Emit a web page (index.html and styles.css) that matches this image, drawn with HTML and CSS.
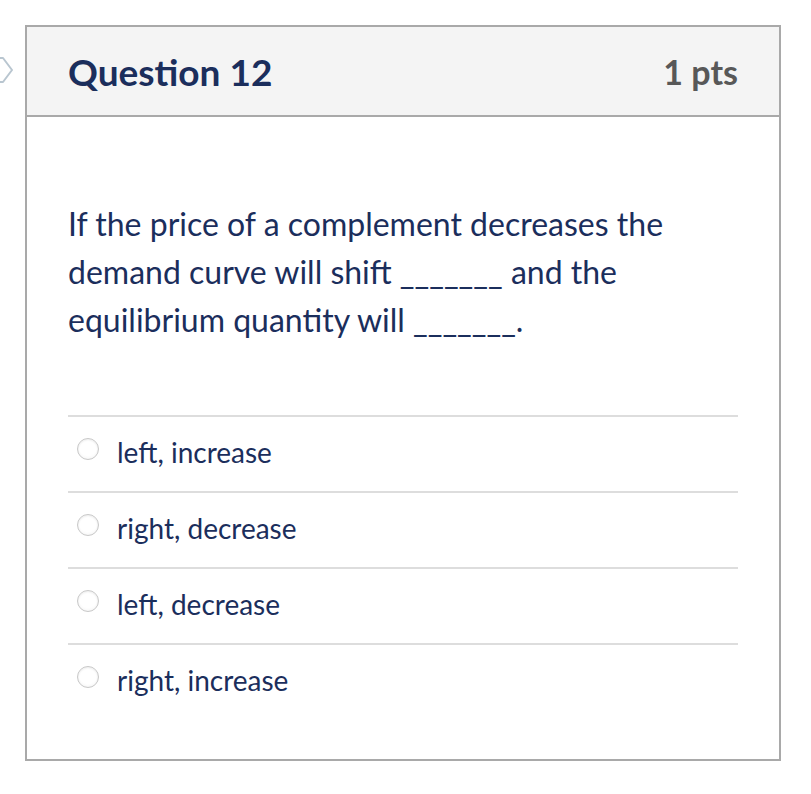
FILE: index.html
```html
<!DOCTYPE html>
<html lang="en">
<head>
<meta charset="utf-8">
<title>Question 12</title>
<link rel="stylesheet" href="styles.css">
</head>
<body>
<div class="page">
  <svg class="nav-arrow" width="14" height="26" viewBox="0 0 14 26" aria-hidden="true">
    <path d="M-6 1 L3 1 L12 13 L3 25 L-6 25" fill="none" stroke="#b9c6d0" stroke-width="2" stroke-linejoin="round"/>
  </svg>
  <div class="question">
    <div class="q-header">
      <h2 class="q-title">Question 12</h2>
      <span class="q-pts">1 pts</span>
    </div>
    <div class="q-body">
      <p class="q-text">If the price of a complement decreases the demand curve will shift _______ and the equilibrium quantity will _______.</p>
      <ul class="answers">
        <li class="answer"><span class="radio"></span><span class="answer-label">left, increase</span></li>
        <li class="answer"><span class="radio"></span><span class="answer-label">right, decrease</span></li>
        <li class="answer"><span class="radio"></span><span class="answer-label">left, decrease</span></li>
        <li class="answer"><span class="radio"></span><span class="answer-label">right, increase</span></li>
      </ul>
    </div>
  </div>
</div>
</body>
</html>
```
FILE: styles.css
```css
html, body {
  margin: 0;
  padding: 0;
  background: #ffffff;
}
body {
  font-family: Lato, "Noto Sans", sans-serif;
}
.page {
  position: relative;
  padding: 25px 0 0 25px;
}
.nav-arrow {
  position: absolute;
  left: 0;
  top: 57px;
}
.question {
  width: 756px;
  height: 736px;
  box-sizing: border-box;
  border: 2px solid #a9a9a9;
  background: #ffffff;
}
.q-header {
  display: flex;
  align-items: center;
  justify-content: space-between;
  height: 88px;
  padding: 0 41px;
  background: #f4f4f4;
  border-bottom: 2px solid #a9a9a9;
}
.q-title {
  margin: 0;
  font-size: 37px;
  font-weight: 700;
  color: #1b2e5c;
}
.q-pts {
  font-size: 34px;
  font-weight: 700;
  color: #585858;
}
.q-body {
  padding: 83px 41px 0;
}
.q-text {
  margin: 0 0 71px;
  font-size: 32px;
  line-height: 48px;
  color: #1b2e5c;
}
.answers {
  list-style: none;
  margin: 0;
  padding: 0;
}
.answer {
  display: flex;
  align-items: center;
  box-sizing: border-box;
  height: 76px;
  padding-bottom: 4px;
  border-top: 2px solid #dddddd;
}
.radio {
  width: 20px;
  height: 20px;
  margin: 0 18px 6px 9px;
  border-radius: 50%;
  border: 1px solid #c8c8c8;
  background: radial-gradient(circle at 50% 40%, #ffffff 55%, #f0f0f0 100%);
  box-shadow: inset 0 1px 2px rgba(0,0,0,0.08);
}
.answer-label {
  font-size: 28px;
  color: #1b2e5c;
}
```
